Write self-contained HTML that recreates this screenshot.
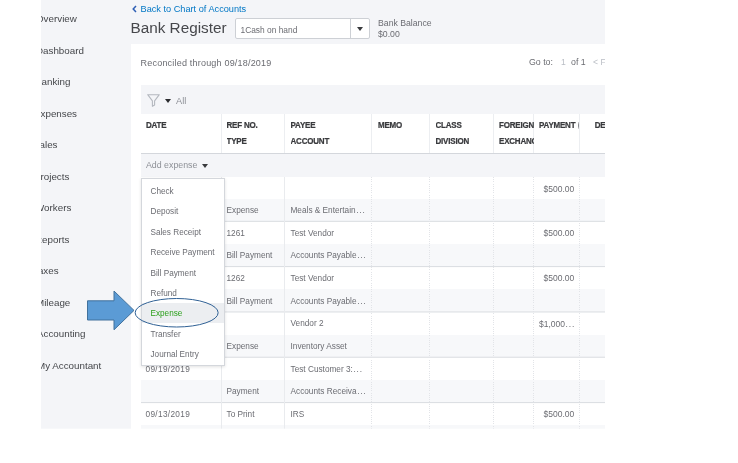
<!DOCTYPE html>
<html><head><meta charset="utf-8"><title>Bank Register</title>
<style>
html,body{margin:0;padding:0;background:#fff;}
body{width:738px;height:463px;position:relative;overflow:hidden;font-family:"Liberation Sans",sans-serif;color:#393a3d;}
#shot{position:absolute;left:41px;top:0;width:564px;height:429px;background:#f4f5f8;overflow:hidden;}
#shot *{position:absolute;white-space:nowrap;}
#txt{left:0;top:0;width:564px;height:429px;will-change:transform;}
.nav{transform:rotate(0.02deg);font-size:9.8px;color:#44464a;line-height:12px;}
.panel{left:90px;top:43.7px;width:474px;height:386px;background:#fff;}
.fbar{left:100px;top:84.6px;width:464px;height:29.2px;background:#f4f5f8;}
.th{font-size:8px;font-weight:bold;color:#393a3d;-webkit-text-stroke:0.22px #393a3d;line-height:11px;overflow:hidden;height:11px;letter-spacing:-0.2px;transform:scaleY(1.12);transform-origin:50% 75%;}
.td{font-size:8.25px;color:#6b6c72;line-height:10px;}
.stripe{left:100px;width:464px;background:#f7f8fa;}
.hl{left:100px;width:464px;height:1px;background:#dcdfe3;}
.vl{width:1px;background:#e9ebee;}
.vd{width:1px;background:repeating-linear-gradient(to bottom,#e2e4e8 0,#e2e4e8 1px,transparent 1px,transparent 2.2px);}
.vh{width:1px;background:#eceef1;}
.dd{left:100.3px;top:178.2px;width:82px;height:186px;background:#fff;border:1px solid #d4d7dc;box-shadow:0 1px 3px rgba(0,0,0,.12);}
.ddi{left:8.2px;font-size:8.2px;color:#6b6c72;line-height:10px;}
</style></head><body>
<div id="shot"><div id="txt">

<div class="nav" style="right:528.5px;top:13.0px">Overview</div>
<div class="nav" style="right:521.5px;top:44.5px">Dashboard</div>
<div class="nav" style="right:534.5px;top:76.0px">Banking</div>
<div class="nav" style="right:528.3px;top:107.5px">Expenses</div>
<div class="nav" style="right:547.1px;top:139.0px">Sales</div>
<div class="nav" style="right:535.8px;top:170.5px">Projects</div>
<div class="nav" style="right:533.8px;top:202.0px">Workers</div>
<div class="nav" style="right:536.1px;top:233.5px">Reports</div>
<div class="nav" style="right:546.0px;top:265.0px">Taxes</div>
<div class="nav" style="right:534.7px;top:296.5px">Mileage</div>
<div class="nav" style="right:519.6px;top:328.0px">Accounting</div>
<div class="nav" style="right:503.7px;top:359.5px">My Accountant</div>
<div class="panel"></div>
<svg style="left:91px;top:5.2px" width="5" height="8" viewBox="0 0 5 8"><path d="M4 1 L1.2 4 L4 7" fill="none" stroke="#2e5fb5" stroke-width="1.5"/></svg>
<div style="left:99.5px;top:3.8px;font-size:9.2px;line-height:11px;color:#0077c5">Back to Chart of Accounts</div>
<div style="left:89.5px;top:18px;font-size:15.3px;line-height:20px;color:#46474b">Bank Register</div>
<div style="left:193.5px;top:18.3px;width:135.5px;height:21px;background:#fff;border:1px solid #cdd0d5;border-radius:2px;box-sizing:border-box"></div>
<div style="left:309.3px;top:19px;width:1px;height:20px;background:#cdd0d5"></div>
<div style="left:199.5px;top:24.7px;font-size:8.4px;line-height:10px;color:#6b6c72">1Cash on hand</div>
<div style="left:315.5px;top:27.2px;width:0;height:0;border-left:3.3px solid transparent;border-right:3.3px solid transparent;border-top:4px solid #393a3d"></div>
<div style="left:337px;top:17.8px;font-size:8.7px;line-height:10px;color:#6b6c72">Bank Balance</div>
<div style="left:337px;top:28.8px;font-size:8.7px;line-height:10px;color:#6b6c72">$0.00</div>
<div style="left:99.6px;top:57.5px;font-size:9px;line-height:11px;color:#6b6c72;letter-spacing:0.2px">Reconciled through 09/18/2019</div>
<div style="left:488px;top:57.3px;font-size:8.8px;line-height:11px;color:#6b6c72">Go to:</div>
<div style="left:520px;top:57.3px;font-size:8.6px;line-height:11px;color:#babec5">1</div>
<div style="left:530px;top:57.3px;font-size:8.8px;line-height:11px;color:#6b6c72">of 1</div>
<div style="left:552px;top:57.3px;font-size:8.6px;line-height:11px;color:#babec5">&lt; F</div>
<div class="fbar"></div>
<svg style="left:106px;top:94.2px" width="13" height="13" viewBox="0 0 13 13"><path d="M0.7 0.7 H12.3 L7.6 6.9 V11 L5.4 12.3 V6.9 Z" fill="none" stroke="#b4b8bf" stroke-width="1.1" stroke-linejoin="round"/></svg>
<div style="left:124.2px;top:99.2px;width:0;height:0;border-left:3.4px solid transparent;border-right:3.4px solid transparent;border-top:4.2px solid #2b2c2f"></div>
<div style="left:135px;top:95.8px;font-size:9.2px;line-height:11px;color:#8d9096">All</div>
<div class="vh" style="left:179.8px;top:114px;height:39px"></div>
<div class="vh" style="left:243px;top:114px;height:39px"></div>
<div class="vh" style="left:330.3px;top:114px;height:39px"></div>
<div class="vh" style="left:388.3px;top:114px;height:39px"></div>
<div class="vh" style="left:452.3px;top:114px;height:39px"></div>
<div class="vh" style="left:492.3px;top:114px;height:39px"></div>
<div class="vh" style="left:538.1px;top:114px;height:39px"></div>
<div class="th" style="left:105px;top:119.6px;width:70px">DATE</div>
<div class="th" style="left:185.5px;top:119.6px;width:55px">REF NO.</div>
<div class="th" style="left:185.5px;top:135.8px;width:55px">TYPE</div>
<div class="th" style="left:249.5px;top:119.6px;width:80px">PAYEE</div>
<div class="th" style="left:249.5px;top:135.8px;width:80px">ACCOUNT</div>
<div class="th" style="left:337px;top:119.6px;width:50px">MEMO</div>
<div class="th" style="left:394.5px;top:119.6px;width:56px">CLASS</div>
<div class="th" style="left:394.5px;top:135.8px;width:56px">DIVISION</div>
<div class="th" style="left:458px;top:119.6px;width:34.5px">FOREIGN</div>
<div class="th" style="left:458px;top:135.8px;width:34.5px">EXCHANG</div>
<div class="th" style="left:498px;top:119.6px;width:40px">PAYMENT</div>
<div class="th" style="left:553.8px;top:119.6px;width:10.2px">DE</div>
<div class="th" style="left:536.8px;top:119.6px;color:#a0a3a9;font-weight:normal;width:1.6px">(</div>
<div class="hl" style="top:153px;background:#d4d7dc"></div>
<div class="stripe" style="top:154px;height:23px;background:#f4f5f8"></div>
<div style="left:105px;top:160.2px;font-size:8.8px;line-height:10px;color:#8d9096">Add expense</div>
<div style="left:161px;top:164px;width:0;height:0;border-left:3.2px solid transparent;border-right:3.2px solid transparent;border-top:4.2px solid #393a3d"></div>
<div class="td" style="left:493px;top:183.6px;width:40.3px;text-align:right;font-size:8.5px">$500.00</div>
<div class="stripe" style="top:198.7px;height:22.6px"></div>
<div class="td" style="left:185.5px;top:205.9px">Expense</div>
<div class="td" style="left:249.5px;top:205.9px">Meals &amp; Entertain<span style="position:static;letter-spacing:0.8px;margin-left:0.6px;margin-right:-0.8px">...</span></div>
<div class="td" style="left:185.5px;top:228.5px">1261</div>
<div class="td" style="left:249.5px;top:228.5px">Test Vendor</div>
<div class="td" style="left:493px;top:227.9px;width:40.3px;text-align:right;font-size:8.5px">$500.00</div>
<div class="stripe" style="top:243.9px;height:22.6px"></div>
<div class="td" style="left:185.5px;top:251.1px">Bill Payment</div>
<div class="td" style="left:249.5px;top:251.1px">Accounts Payable<span style="position:static;letter-spacing:0.8px;margin-left:0.6px;margin-right:-0.8px">...</span></div>
<div class="td" style="left:185.5px;top:273.9px">1262</div>
<div class="td" style="left:249.5px;top:273.9px">Test Vendor</div>
<div class="td" style="left:493px;top:273.3px;width:40.3px;text-align:right;font-size:8.5px">$500.00</div>
<div class="stripe" style="top:289.3px;height:22.6px"></div>
<div class="td" style="left:185.5px;top:296.5px">Bill Payment</div>
<div class="td" style="left:249.5px;top:296.5px">Accounts Payable<span style="position:static;letter-spacing:0.8px;margin-left:0.6px;margin-right:-0.8px">...</span></div>
<div class="td" style="left:249.5px;top:319.2px">Vendor 2</div>
<div class="td" style="left:493px;top:318.6px;width:40.3px;text-align:right;font-size:8.5px">$1,000<span style="position:static;letter-spacing:0.8px;margin-left:0.6px;margin-right:-0.8px">...</span></div>
<div class="stripe" style="top:334.6px;height:22.6px"></div>
<div class="td" style="left:185.5px;top:341.8px">Expense</div>
<div class="td" style="left:249.5px;top:341.8px">Inventory Asset</div>
<div class="td" style="left:104.5px;top:364.5px;letter-spacing:0.33px">09/19/2019</div>
<div class="td" style="left:249.5px;top:364.5px">Test Customer 3:<span style="position:static;letter-spacing:0.8px;margin-left:0.6px;margin-right:-0.8px">...</span></div>
<div class="stripe" style="top:379.9px;height:22.6px"></div>
<div class="td" style="left:185.5px;top:387.1px">Payment</div>
<div class="td" style="left:249.5px;top:387.1px">Accounts Receiva<span style="position:static;letter-spacing:0.8px;margin-left:0.6px;margin-right:-0.8px">...</span></div>
<div class="td" style="left:104.5px;top:409.8px;letter-spacing:0.33px">09/13/2019</div>
<div class="td" style="left:185.5px;top:409.8px">To Print</div>
<div class="td" style="left:249.5px;top:409.8px">IRS</div>
<div class="td" style="left:493px;top:409.2px;width:40.3px;text-align:right;font-size:8.5px">$500.00</div>
<div class="stripe" style="top:425.2px;height:22.6px"></div>
<svg style="left:100px;top:0" width="464" height="428" viewBox="0 0 464 428"><rect x="0" y="220.8" width="464" height="1.1" fill="#dcdfe3"/><rect x="0" y="266.0" width="464" height="1.1" fill="#dcdfe3"/><rect x="0" y="311.4" width="464" height="1.1" fill="#dcdfe3"/><rect x="0" y="356.7" width="464" height="1.1" fill="#dcdfe3"/><rect x="0" y="402.0" width="464" height="1.1" fill="#dcdfe3"/><rect x="0" y="447.3" width="464" height="1.1" fill="#dcdfe3"/></svg>
<div class="vl" style="left:179.8px;top:177px;height:252px"></div>
<div class="vl" style="left:243px;top:177px;height:252px"></div>
<div class="vd" style="left:330.3px;top:177px;height:252px"></div>
<div class="vd" style="left:388.3px;top:177px;height:252px"></div>
<div class="vd" style="left:452.3px;top:177px;height:252px"></div>
<div class="vd" style="left:492.3px;top:177px;height:252px"></div>
<div class="vd" style="left:538.1px;top:177px;height:252px"></div>
<div class="dd">
<div style="left:0;top:123.4px;width:82px;height:20px;background:#eceef1"></div>
<div class="ddi" style="top:7.9px">Check</div>
<div class="ddi" style="top:28.3px">Deposit</div>
<div class="ddi" style="top:48.6px">Sales Receipt</div>
<div class="ddi" style="top:69.0px">Receive Payment</div>
<div class="ddi" style="top:89.4px">Bill Payment</div>
<div class="ddi" style="top:109.8px">Refund</div>
<div class="ddi" style="top:130.1px;color:#2ca01c">Expense</div>
<div class="ddi" style="top:150.5px">Transfer</div>
<div class="ddi" style="top:170.9px">Journal Entry</div>
</div>
<div style="left:0;top:428px;width:564px;height:1px;background:rgba(255,255,255,0.32)"></div>
</div></div>
<svg style="position:absolute;left:0;top:0" width="738" height="463" viewBox="0 0 738 463">
<path d="M87.5 300.8 H114 V291 L134 310.4 L114 329.8 V320 H87.5 Z" fill="#5b9bd5" stroke="#41719c" stroke-width="1"/>
<ellipse cx="176.65" cy="312.75" rx="41.5" ry="14.25" fill="none" stroke="#2f6094" stroke-width="1"/>
</svg>
</body></html>
